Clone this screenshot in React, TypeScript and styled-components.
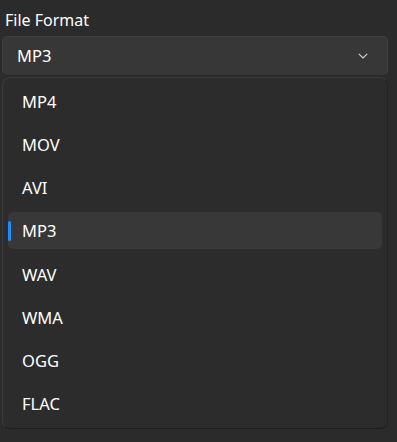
import React, { useState } from "react";
import styled, { createGlobalStyle } from "styled-components";

const Global = createGlobalStyle`
  html, body { margin: 0; padding: 0; background: #2b2b2b; }
  body { width: 397px; height: 442px; overflow: hidden; font-family: "Noto Sans", "Open Sans", sans-serif; color: #ffffff; }
`;

const Page = styled.div`
  display: flex;
  flex-direction: column;
  padding: 9px 9px 0 2px;
`;

const Label = styled.div`
  font-size: 16px;
  line-height: 22px;
  padding-left: 3px;
  margin-bottom: 5px;
  color: #ffffff;
`;

const Select = styled.button`
  display: flex;
  align-items: center;
  justify-content: space-between;
  height: 39px;
  box-sizing: border-box;
  padding: 0 19px 0 14px;
  background: #373737;
  border: 1px solid #3f3f3f;
  border-bottom-color: #353535;
  border-radius: 5px;
  color: #ffffff;
  font: inherit;
  font-size: 16.5px;
  cursor: pointer;
`;

const Panel = styled.div`
  margin-top: 2px;
  height: 352px;
  box-sizing: border-box;
  border: 1px solid #3a3a3a;
  border-bottom-color: #1f1f1f;
  border-right-color: #232323;
  border-radius: 8px;
  background: #2c2c2c;
  padding: 5px 5px 0 5px;
  display: flex;
  flex-direction: column;
  gap: 6.15px;
`;

const Item = styled.div<{ $selected?: boolean }>`
  position: relative;
  height: 37px;
  display: flex;
  align-items: center;
  padding-left: 14px;
  border-radius: 5px;
  font-size: 16.5px;
  background: ${(p) => (p.$selected ? "#383838" : "transparent")};
`;

const Indicator = styled.span`
  position: absolute;
  left: 0;
  top: 9px;
  width: 3px;
  height: 20px;
  border-radius: 2px;
  background: #1a8fff;
`;

const formats = ["MP4", "MOV", "AVI", "MP3", "WAV", "WMA", "OGG", "FLAC"];

export default function App() {
  const [value, setValue] = useState("MP3");
  return (
    <Page>
      <Global />
      <Label>File Format</Label>
      <Select>
        <span>{value}</span>
        <svg width="10" height="6" viewBox="0 0 10 6" fill="none">
          <path d="M0.8 0.8 L5 5 L9.2 0.8" stroke="#d6d6d6" strokeWidth="1.1" />
        </svg>
      </Select>
      <Panel>
        {formats.map((f) => (
          <Item key={f} $selected={f === value} onClick={() => setValue(f)}>
            {f === value && <Indicator />}
            {f}
          </Item>
        ))}
      </Panel>
    </Page>
  );
}
